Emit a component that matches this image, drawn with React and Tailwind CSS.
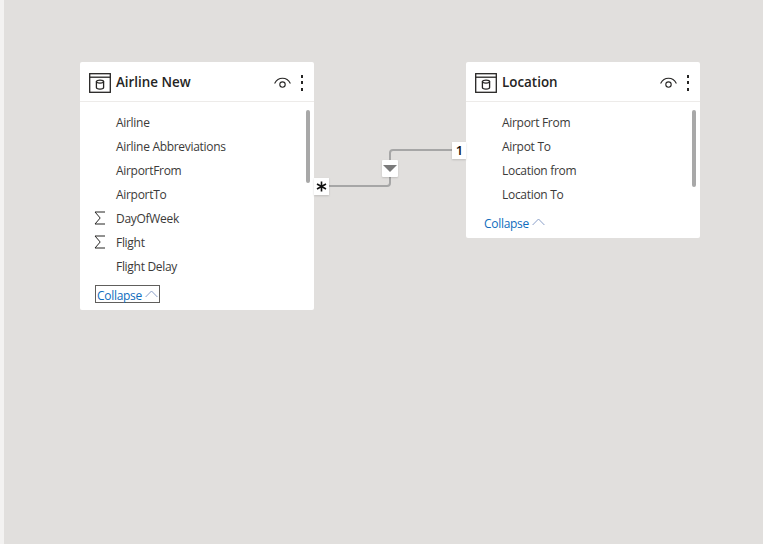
import React from "react";

function TableIcon() {
  return (
    <svg width="22" height="20" viewBox="0 0 22 20" fill="none" stroke="#252423" strokeWidth="1.3" className="shrink-0">
      <rect x="0.7" y="0.7" width="20.6" height="18.6" />
      <path d="M0.7 4.2H21.3" />
      <ellipse cx="11" cy="8.6" rx="3.6" ry="1.5" />
      <path d="M7.4 8.6V14.6C7.4 15.7 9.1 16.1 11 16.1C12.9 16.1 14.6 15.7 14.6 14.6V8.6" />
    </svg>
  );
}

function Eye() {
  return (
    <svg width="17" height="12" viewBox="0 0 17 12" fill="none" stroke="#252423" strokeWidth="1.1">
      <path d="M0.6 6.4C2.4 3 5.2 1.2 8.5 1.2C11.8 1.2 14.6 3 16.4 6.4" />
      <circle cx="8.5" cy="7.6" r="2.7" />
    </svg>
  );
}

function Dots() {
  return (
    <div className="flex flex-col gap-[3.5px] w-[2px]">
      <div className="w-[2px] h-[3px] bg-[#252423]" />
      <div className="w-[2px] h-[3px] bg-[#252423]" />
      <div className="w-[2px] h-[3px] bg-[#252423]" />
    </div>
  );
}

function Sigma() {
  return (
    <svg width="12" height="14" viewBox="0 0 12 14" fill="none" stroke="#252423" strokeWidth="1">
      <path d="M11 1H1L6.2 7L1 13H11" />
    </svg>
  );
}

function Chevron() {
  return (
    <svg width="13" height="8" viewBox="0 0 13 8" fill="none" stroke="#8a9fc9" strokeWidth="1">
      <path d="M0.6 7L6.5 1L12.4 7" />
    </svg>
  );
}

function Card({ title, rows, left, thumb, boxed }) {
  return (
    <div className={`absolute top-[62px] w-[234px] bg-white rounded-[2px] ${left}`}>
      <div className="h-[40px] border-b border-[#edebe9] flex items-center pt-[2px] pl-[9px] pr-[11px]">
        <TableIcon />
        <span className="ml-[5px] text-[13.4px] font-[550] text-[#252423] leading-none">{title}</span>
        <div className="ml-auto flex items-center gap-[10px]">
          <Eye />
          <Dots />
        </div>
      </div>
      <div className="relative pt-[8px]">
        {rows.map(([name, sum]) => (
          <div key={name} className="h-[24px] flex items-center relative pl-[36px] pt-[2px] text-[12px] tracking-[-0.3px] text-[#3b3a39]">
            {sum && (
              <span className="absolute left-[14px] top-[5px]">
                <Sigma />
              </span>
            )}
            {name}
          </div>
        ))}
        <div className={`absolute top-[8px] right-[4px] w-[4px] rounded-[2px] bg-[#a8a8a8] ${thumb}`} />
        <div className={boxed ? "pl-[15px] pt-[7px] pb-[7px]" : "pl-[18px] pt-[7px] pb-[7px]"}>
          <div
            className={`flex w-fit items-center h-[18px] pt-[3px] text-[12px] tracking-[-0.3px] text-[#0f6cbd] gap-[3px] ${
              boxed ? "border border-[#605e5c] px-[1px]" : ""
            }`}
          >
            Collapse
            <span className="-mt-[3px]">
              <Chevron />
            </span>
          </div>
        </div>
      </div>
    </div>
  );
}

function Badge({ className, children }) {
  return (
    <div className={`absolute bg-white flex items-center justify-center shadow-[0_1px_2px_rgba(0,0,0,0.15)] ${className}`}>
      {children}
    </div>
  );
}

export default function App() {
  return (
    <div className="w-[763px] h-[544px] bg-[#f3f2f1] pl-[4px] overflow-hidden font-['Open_Sans','Noto_Sans',sans-serif]">
      <div className="relative w-full h-full bg-[#e1dfdd]">
        <div className="absolute top-0 left-[-4px] w-[763px] h-[544px]">
          <Card
            title="Airline New"
            left="left-[80px]"
            thumb="h-[73px]"
            boxed
            rows={[
              ["Airline"],
              ["Airline Abbreviations"],
              ["AirportFrom"],
              ["AirportTo"],
              ["DayOfWeek", true],
              ["Flight", true],
              ["Flight Delay"],
            ]}
          />
          <Card
            title="Location"
            left="left-[466px]"
            thumb="h-[77px]"
            rows={[["Airport From"], ["Airpot To"], ["Location from"], ["Location To"]]}
          />
          <svg className="absolute left-0 top-0" width="763" height="544" fill="none">
            <path d="M329 186H387Q390 186 390 183V153Q390 150 393 150H452" stroke="#a6a6a6" strokeWidth="2" />
          </svg>
          <Badge className="left-[314px] top-[178px] w-[15px] h-[17px]">
            <svg width="11" height="11" viewBox="0 0 11 11" stroke="#111" strokeWidth="1.6">
              <path d="M5.5 0.5V10.5M1 3L10 8M10 3L1 8" />
            </svg>
          </Badge>
          <Badge className="left-[452px] top-[142px] w-[14px] h-[17px] pl-[1px] text-[13px] font-semibold text-[#111] leading-none">
            1
          </Badge>
          <Badge className="left-[382px] top-[160px] w-[16px] h-[17px] rounded-[1px]">
            <svg width="14" height="7" viewBox="0 0 14 7">
              <path d="M0 0H14L7 7Z" fill="#7a7a7a" />
            </svg>
          </Badge>
        </div>
      </div>
    </div>
  );
}
